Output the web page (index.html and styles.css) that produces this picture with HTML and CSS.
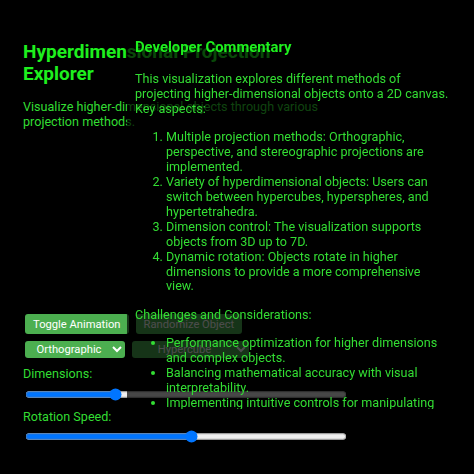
FILE: index.html
```html
<!DOCTYPE html>
<html lang="en">
<head>
<meta charset="utf-8">
<title>Hyperdimensional Projection Explorer</title>
<link rel="stylesheet" href="styles.css">
</head>
<body>
<main class="app">
  <h2 class="title">Hyperdimensional Projection Explorer</h2>
  <p class="intro">Visualize higher-dimensional objects through various projection methods.</p>
  <canvas class="viz" width="320" height="160"></canvas>
  <div class="controls">
    <div class="row">
      <button class="btn">Toggle Animation</button>
      <button class="btn">Randomize Object</button>
    </div>
    <div class="row">
      <select class="sel sel-proj">
        <option>Orthographic</option>
        <option>Perspective</option>
        <option>Stereographic</option>
      </select>
      <select class="sel sel-obj">
        <option>Hypercube</option>
        <option>Hypersphere</option>
        <option>Hypertetrahedron</option>
      </select>
    </div>
    <label class="lbl" for="dims">Dimensions:</label>
    <input class="range" id="dims" type="range" min="0" max="1000" value="273">
    <label class="lbl" for="speed">Rotation Speed:</label>
    <input class="range" id="speed" type="range" min="0" max="1000" value="518">
  </div>
</main>
<aside class="commentary">
  <h3 class="c-title">Developer Commentary</h3>
  <p>This visualization explores different methods of projecting higher-dimensional objects onto a 2D canvas.<br>Key aspects:</p>
  <ol class="c-list">
    <li>Multiple projection methods: Orthographic, perspective, and stereographic projections are implemented.</li>
    <li>Variety of hyperdimensional objects: Users can switch between hypercubes, hyperspheres, and hypertetrahedra.</li>
    <li>Dimension control: The visualization supports objects from 3D up to 7D.</li>
    <li>Dynamic rotation: Objects rotate in higher dimensions to provide a more comprehensive view.</li>
  </ol>
  <p>Challenges and Considerations:</p>
  <ul class="c-list">
    <li>Performance optimization for higher dimensions and complex objects.</li>
    <li>Balancing mathematical accuracy with visual interpretability.</li>
    <li>Implementing intuitive controls for manipulating high-dimensional objects.</li>
    <li>Ensuring smooth animation across all projection methods.</li>
  </ul>
</aside>
</body>
</html>
```

FILE: styles.css
```css
html, body {
  margin: 0;
  background: #000;
}

body {
  color: #33dd33;
  font-family: Roboto, "Noto Sans", sans-serif;
  font-size: 12.6px;
  line-height: 14.9px;
}

.app {
  padding: 25px 0 0 23px;
  width: 330px;
}

.title {
  font-size: 19px;
  line-height: 22.3px;
  font-weight: 700;
  color: #1ef01e;
  margin: 15.9px 0 14.9px;
  max-width: 300px;
}

.intro {
  margin: 12.8px 0;
}

.viz {
  display: block;
  width: 320px;
  height: 160px;
  background: #000;
}

.controls {
  margin-top: 11.4px;
  padding-left: 2px;
}

.row {
  display: flex;
  gap: 7px;
  margin-bottom: 7.2px;
}

.btn {
  background: #4caf50;
  color: #fff;
  border: 0;
  border-radius: 3px;
  padding: 3.3px 8px;
  font-family: Roboto, sans-serif;
  font-size: 11.2px;
  line-height: normal;
}

.sel {
  background: #4caf50;
  color: #fff;
  border: 0;
  border-radius: 3px;
  height: 17px;
  padding: 0 4px;
  font-family: Roboto, sans-serif;
  font-size: 11.2px;
  text-align: center;
}

.sel-proj {
  width: 100px;
}

.sel-obj {
  width: 117px;
}

.lbl {
  display: block;
  margin-left: -2px;
  padding-top: 2px;
}

.range {
  display: block;
  zoom: 0.8;
  width: 402px;
  margin: 7.3px 0 8.6px 0;
}

.commentary {
  position: fixed;
  top: 16px;
  right: 15px;
  width: 332px;
  height: 393px;
  box-sizing: border-box;
  padding: 9px 8px 8px;
  background: rgba(0, 0, 0, 0.7);
  overflow: hidden;
}

.c-title {
  font-size: 14.8px;
  line-height: 17.3px;
  font-weight: 700;
  color: #1ef01e;
  margin: 14px 0 16px;
}

.commentary p {
  margin: 12.8px 0;
}

.c-list {
  margin: 13.4px 0;
  padding-left: 31px;
}
```
